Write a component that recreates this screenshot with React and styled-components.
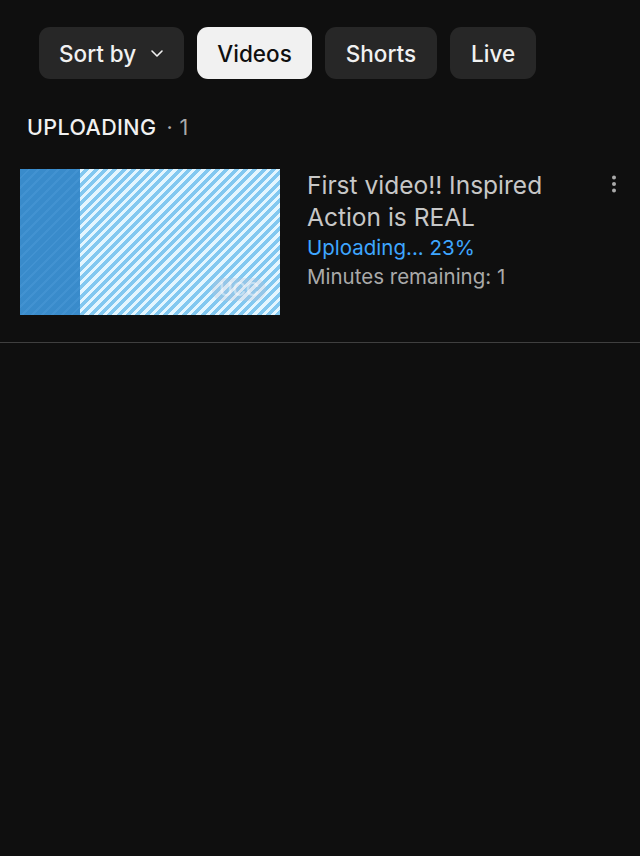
import React from "react";
import styled, { createGlobalStyle } from "styled-components";

const Global = createGlobalStyle`
  html, body {
    margin: 0;
    background: #0f0f0f;
  }
  body {
    font-family: Inter, "Noto Sans", Roboto, sans-serif;
    color: #f1f1f1;
  }
`;

const S = {};

S.Page = styled.div`
  width: 640px;
  min-height: 856px;
  background: #0f0f0f;
`;

S.ChipBar = styled.div`
  display: flex;
  gap: 13px;
  padding: 27px 0 0 39px;
`;

S.Chip = styled.button`
  display: flex;
  align-items: center;
  gap: 14px;
  height: 52px;
  padding: 0 ${p => (p.$roomy ? "21px" : "20px")};
  border: none;
  border-radius: 11px;
  background: ${p => (p.$active ? "#f1f1f1" : "#272727")};
  color: ${p => (p.$active ? "#0f0f0f" : "#f1f1f1")};
  font-family: inherit;
  font-size: 22.5px;
  font-weight: 500;
`;

S.SectionHead = styled.div`
  display: flex;
  align-items: center;
  gap: 10px;
  height: 30px;
  padding: 33px 0 0 27px;
  font-size: 21.5px;
  font-weight: 500;
  letter-spacing: 0.4px;
`;

S.Count = styled.span`
  color: #aaaaaa;
  font-weight: 400;
`;

S.Item = styled.div`
  display: flex;
  padding: 27px 0 27px 20px;
  border-bottom: 1px solid #3f3f3f;
`;

S.Thumb = styled.div`
  position: relative;
  display: flex;
  width: 260px;
  height: 146px;
  flex-shrink: 0;
  overflow: hidden;
  background: repeating-linear-gradient(
    -45deg,
    #82c8f0 0px,
    #82c8f0 3.6px,
    #e4f6ff 3.6px,
    #e4f6ff 6.6px
  );
`;

S.Progress = styled.div`
  height: 100%;
  background: repeating-linear-gradient(
    -45deg,
    #398bcb 0px,
    #398bcb 5px,
    #4292d1 5px,
    #4292d1 7px
  );
`;

S.Badge = styled.div`
  position: absolute;
  right: 14px;
  bottom: 14px;
  padding: 1px 7px;
  border-radius: 14px;
  background: rgba(190, 195, 215, 0.3);
  color: rgba(255, 255, 255, 0.45);
  font-size: 18px;
  font-weight: 600;
`;

S.Info = styled.div`
  flex: 1;
  padding-left: 27px;
  display: flex;
  flex-direction: column;
`;

S.Title = styled.div`
  width: 270px;
  font-size: 24.5px;
  line-height: 32px;
  color: #c7c7c7;
`;

S.Status = styled.div`
  font-size: 20.5px;
  line-height: 29px;
  color: ${p => (p.$accent ? "#3ea6ff" : "#aaaaaa")};
`;

S.Menu = styled.div`
  width: 52px;
  display: flex;
  justify-content: center;
  padding-top: 6px;
`;

const Chevron = () => (
  <svg width="14" height="9" viewBox="0 0 14 9" fill="none">
    <path d="M2 2l5 5 5-5" stroke="#f1f1f1" strokeWidth="1.6" strokeLinecap="round" strokeLinejoin="round" />
  </svg>
);

const Kebab = () => (
  <svg width="6" height="18" viewBox="0 0 6 18">
    <circle cx="3" cy="2.5" r="2" fill="#aaa" />
    <circle cx="3" cy="9" r="2" fill="#aaa" />
    <circle cx="3" cy="15.5" r="2" fill="#aaa" />
  </svg>
);

const upload = { title: "First video!! Inspired Action is REAL", percent: 23, minutes: 1 };

const App = () => {
  return (
    <S.Page>
      <Global />
      <S.ChipBar>
        <S.Chip>
          Sort by <Chevron />
        </S.Chip>
        <S.Chip $active>Videos</S.Chip>
        <S.Chip $roomy>Shorts</S.Chip>
        <S.Chip $roomy>Live</S.Chip>
      </S.ChipBar>

      <S.SectionHead>
        UPLOADING <S.Count>· 1</S.Count>
      </S.SectionHead>

      <S.Item>
        <S.Thumb>
          <S.Progress style={{ width: `${upload.percent}%` }} />
          <S.Badge>UCC</S.Badge>
        </S.Thumb>
        <S.Info>
          <S.Title>{upload.title}</S.Title>
          <S.Status $accent>Uploading... {upload.percent}%</S.Status>
          <S.Status>Minutes remaining: {upload.minutes}</S.Status>
        </S.Info>
        <S.Menu>
          <Kebab />
        </S.Menu>
      </S.Item>
    </S.Page>
  );
};

export default App;
